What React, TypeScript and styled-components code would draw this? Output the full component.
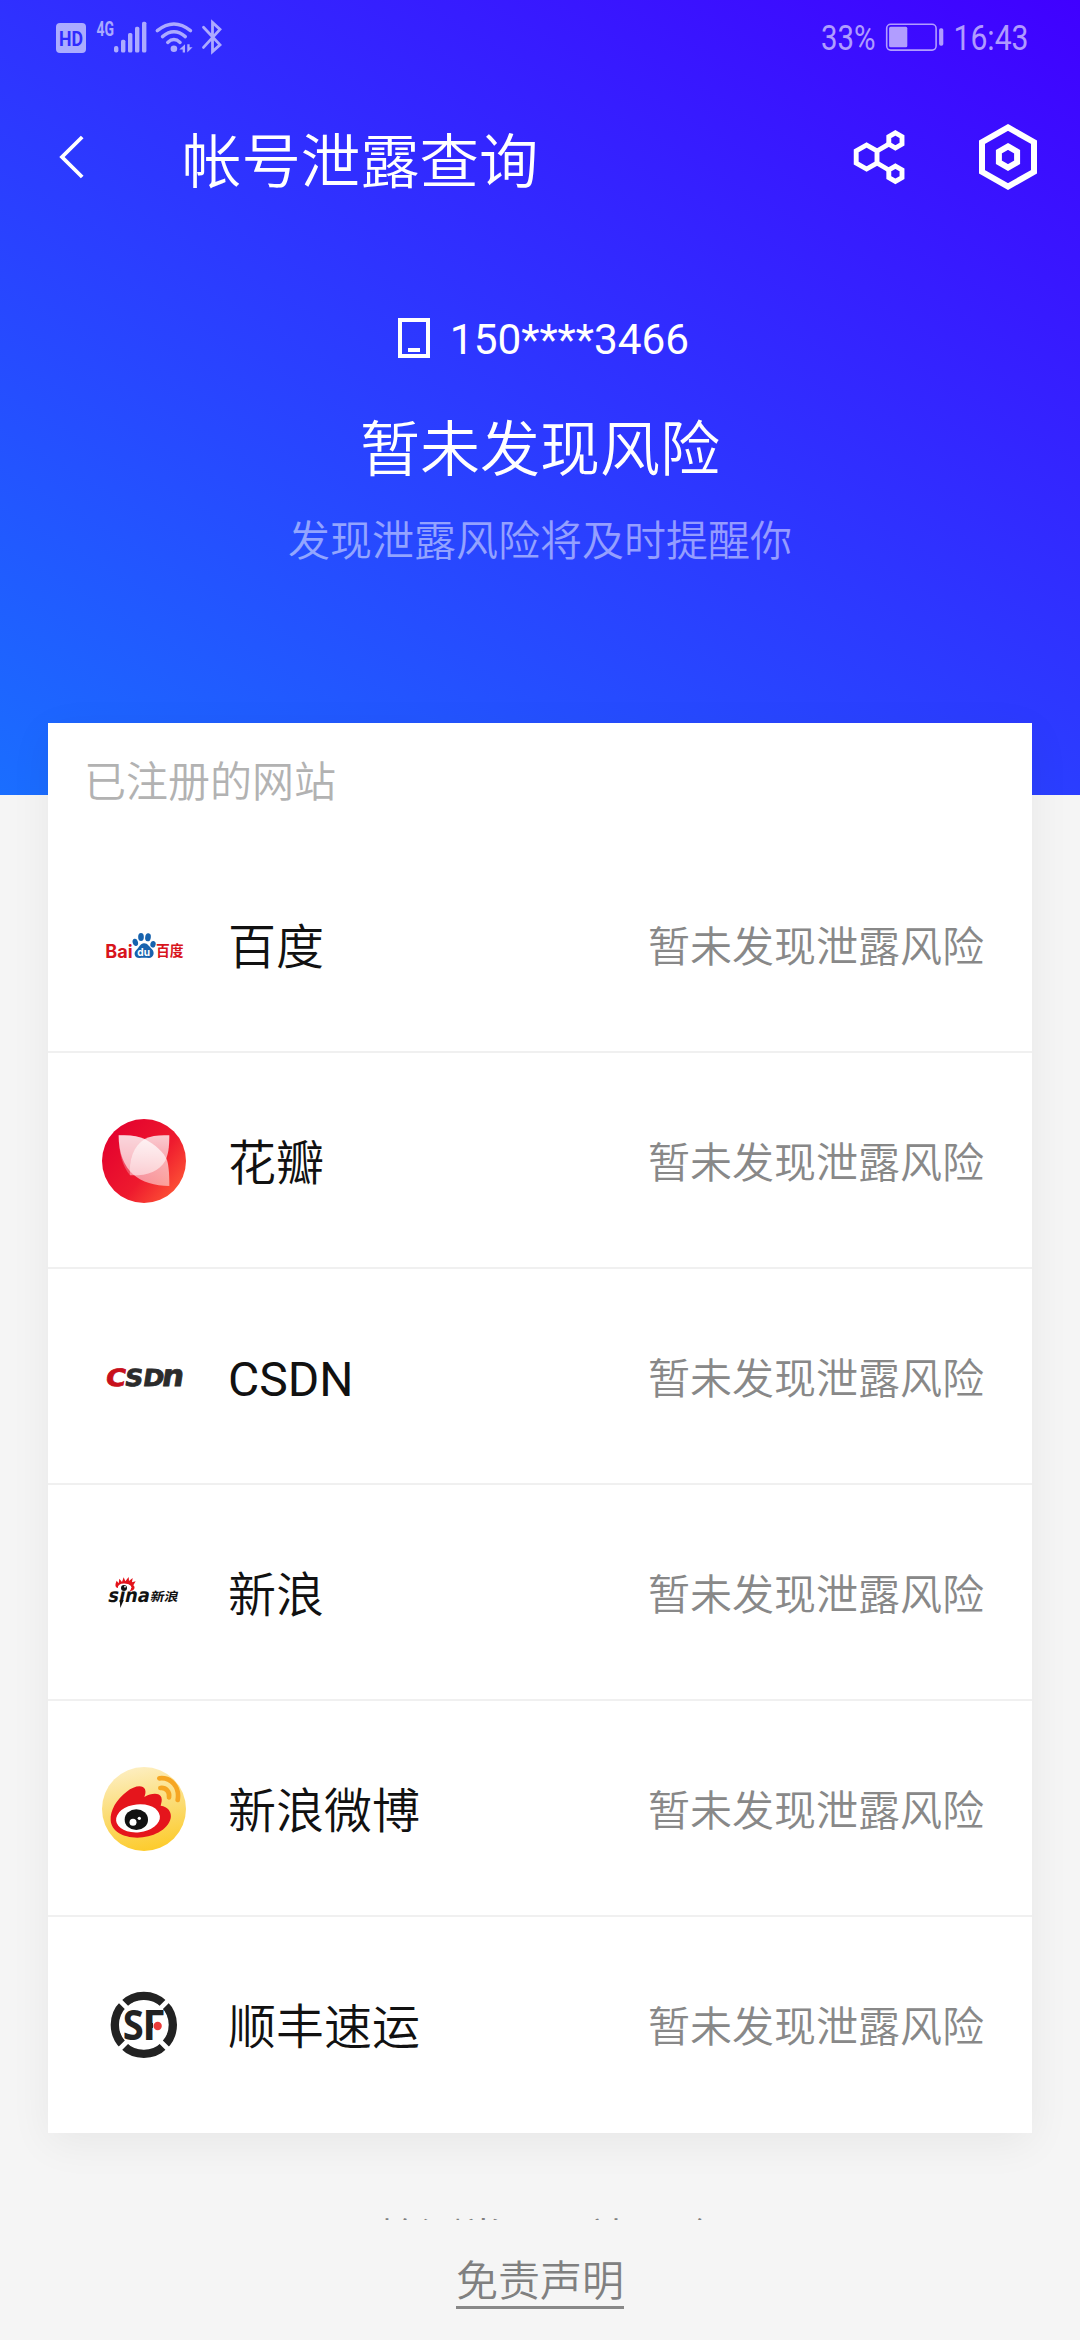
import React from "react";
import styled, { createGlobalStyle } from "styled-components";

const GlobalStyle = createGlobalStyle`
  html, body { margin: 0; padding: 0; background: #f5f5f5; }
  *, *::before, *::after { box-sizing: border-box; }
  body { font-family: Roboto, "Noto Sans CJK SC", sans-serif; font-weight: 350; overflow: hidden; }
  svg { overflow: visible; display: block; flex: none; }
`;

const Page = styled.div`
  width: 1080px;
  height: 2340px;
  display: flex;
  flex-direction: column;
  overflow: hidden;
`;

const Scroller = styled.main`
  height: 2220px;
  flex: none;
  overflow: hidden;
`;

const Hero = styled.header`
  height: 795px;
  background: linear-gradient(210deg, #4000ff 0%, #1a6eff 100%);
  color: #fff;
  display: flex;
  flex-direction: column;
`;

const StatusBar = styled.div`
  height: 76px;
  padding: 0 52px 0 56px;
  display: flex;
  align-items: center;
  justify-content: space-between;
  color: rgba(255, 255, 255, 0.6);
`;

const Toolbar = styled.div`
  height: 162px;
  padding: 0 43px 0 59px;
  display: flex;
  align-items: center;
`;

const Title = styled.h1`
  margin: 11px 0 0 97px;
  flex: 1;
  font-size: 59.4px;
  line-height: 84px;
  font-weight: 350;
`;

const Actions = styled.div`
  display: flex;
  align-items: center;
  gap: 74px;
`;

const Summary = styled.section`
  display: flex;
  flex-direction: column;
  align-items: center;
  padding-top: 73px;
`;

const Phone = styled.div`
  display: flex;
  align-items: center;
  gap: 20px;
  height: 54px;
  padding-left: 7px;
  font-size: 42.3px;
  line-height: 54px;
  font-weight: 400;
`;

const PhoneNumber = styled.span`
  padding-top: 3px;
`;

const Verdict = styled.h2`
  margin: 44px 0 0;
  font-size: 60px;
  line-height: 84px;
  font-weight: 350;
`;

const Hint = styled.p`
  margin: 19px 0 0;
  font-size: 42px;
  line-height: 60px;
  color: rgba(255, 255, 255, 0.5);
`;

const Card = styled.section`
  position: relative;
  width: 984px;
  margin: -72px auto 0;
  background: #fff;
  box-shadow: 0 10px 40px rgba(0, 0, 0, 0.06);
`;

const CardTitle = styled.h3`
  margin: 0;
  height: 114px;
  padding: 30px 36px 0;
  font-size: 42px;
  line-height: 60px;
  font-weight: 350;
  color: #b2b2b2;
`;

const SiteList = styled.ul`
  list-style: none;
  margin: 0;
  padding: 0;
`;

const SiteRow = styled.li`
  height: 216px;
  padding: 2px 48px 0 54px;
  display: flex;
  align-items: center;
  border-bottom: 2px solid #f0f0f0;
  &:last-child { border-bottom-color: #fff; }
`;

const SiteName = styled.span`
  flex: 1;
  margin-left: 42px;
  padding-top: 5px;
  font-size: 48px;
  line-height: 66px;
  color: #111;
`;

const Latin = styled.span`
  font-weight: 400;
`;

const SiteStatus = styled.span`
  padding-top: 5px;
  font-size: 42px;
  line-height: 60px;
  color: #888;
`;

const Logo = styled.svg`
  width: 84px;
  height: 84px;
`;

const More = styled.p`
  margin: 77px 0 0;
  padding-left: 12px;
  text-align: center;
  font-size: 42px;
  line-height: 60px;
  color: #808080;
`;

const Footer = styled.footer`
  height: 120px;
  background: #f5f5f5;
  display: flex;
  justify-content: center;
  align-items: flex-start;
  padding-top: 32px;
`;

const Disclaimer = styled.a`
  height: 57px;
  border-bottom: 3px solid #888;
  font-size: 42px;
  line-height: 60px;
  color: #808080;
`;

const PhoneStateIcons = () => (
  <svg width="168" height="34" viewBox="56 21 168 34" fill="currentColor">
    <rect x="56" y="23" width="30" height="30" rx="4" />
    <text x="59" y="45.5" fontFamily="Roboto" fontWeight="700" fontSize="20" textLength="24" lengthAdjust="spacingAndGlyphs" fill="#302bff">HD</text>
    <text x="96.5" y="36" fontFamily="Roboto" fontWeight="700" fontSize="19.5" textLength="17.5" lengthAdjust="spacingAndGlyphs">4G</text>
    <rect x="114" y="46" width="4.4" height="6.6" rx="2" />
    <rect x="121" y="39.7" width="4.4" height="12.9" rx="1.6" />
    <rect x="128" y="33" width="4.4" height="19.6" rx="1.6" />
    <rect x="135" y="26.8" width="4.4" height="25.8" rx="1.6" />
    <rect x="142" y="21.7" width="4.4" height="30.9" rx="1.6" />
    <g fill="none" stroke="currentColor" strokeWidth="3.4" strokeLinecap="round">
      <path d="M157.3 30.6Q173.9 17.2 190.5 30.6" />
      <path d="M162.5 36.6Q173.9 26.8 185.3 36.6" />
      <path d="M167.7 42.4Q173.9 36.6 180.1 42.4" />
    </g>
    <circle cx="173.9" cy="48.7" r="3.3" />
    <path d="M185 44.3V52.6H182.7V49.4H179.3ZM187.3 44.3V52.6L192.6 47.3H189.6V44.3Z" />
    <path d="M203.5 27.2L220 44.8L212.5 51.5V22.5L220 29.4L203.5 47.4" fill="none" stroke="currentColor" strokeWidth="2.8" strokeLinecap="round" />
  </svg>
);

const PowerAndTime = () => (
  <svg width="208" height="34" viewBox="819.5 21.5 208 34" fill="currentColor">
    <text x="820.5" y="50.5" fontFamily="Roboto" fontWeight="400" fontSize="35.5" textLength="54.5" lengthAdjust="spacingAndGlyphs">33%</text>
    <rect x="886.2" y="24.8" width="49.4" height="25.8" rx="4" fill="none" stroke="currentColor" strokeWidth="1.6" />
    <rect x="888.6" y="27.3" width="18.2" height="20.4" rx="1.5" />
    <rect x="938.6" y="28.8" width="4.2" height="17.4" rx="1.8" />
    <text x="953" y="50.5" fontFamily="Roboto" fontWeight="400" fontSize="35.5" textLength="75" lengthAdjust="spacingAndGlyphs">16:43</text>
  </svg>
);

const BackIcon = () => (
  <svg width="26" height="44" viewBox="59 135 26 44" fill="none" stroke="#fff" strokeWidth="3.8">
    <path d="M82.2 137L62 157L82.2 177" />
  </svg>
);

const ShareIcon = () => (
  <svg width="51" height="56" viewBox="854 129 51 56" fill="none" stroke="#fff" strokeWidth="4.9">
    <path d="M866.6 145L877 151V163L866.6 169L856.2 163V151Z" />
    <path d="M895.4 132.8L902 136.6V144.2L895.4 148L888.8 144.2V136.6Z" />
    <path d="M895.4 166.2L902 170V177.6L895.4 181.4L888.8 177.6V170Z" />
    <path d="M877 151L888.8 144.2M877 163L888.8 170" />
  </svg>
);

const HexIcon = () => (
  <svg width="58" height="66" viewBox="979 124 58 66" fill="none" stroke="#fff">
    <path d="M1008 127.4L1034 142.2V171.8L1008 186.6L982 171.8V142.2Z" strokeWidth="6" />
    <path d="M1008 146.4L1017.1 151.7V162.3L1008 167.6L998.9 162.3V151.7Z" strokeWidth="6" />
  </svg>
);

const PhoneIcon = () => (
  <svg width="32" height="40" viewBox="0 0 32 40" fill="none" stroke="#fff" strokeWidth="4">
    <path d="M2 2H30V38H2ZM10 32H22" />
  </svg>
);

const BaiduLogo = () => (
  <Logo viewBox="216 609 252 252">
    <text x="226" y="773" fontFamily="Inter" fontWeight="700" fontSize="55" textLength="82" lengthAdjust="spacingAndGlyphs" fill="#d8141c">Bai</text>
    <g fill="#1763ae">
      <ellipse cx="333" cy="711" rx="8.5" ry="12" />
      <ellipse cx="354" cy="712" rx="8.5" ry="12" transform="rotate(8 354 712)" />
      <ellipse cx="316" cy="727" rx="8" ry="11" transform="rotate(-15 316 727)" />
      <ellipse cx="369" cy="733" rx="8" ry="10" transform="rotate(10 369 733)" />
      <path d="M342 730C354 730 358 741 366 748C376 758 370 775 356 774C348 773 337 773 329 774C314 775 309 759 319 750C327 743 331 730 342 730Z" />
    </g>
    <text x="322" y="768" fontFamily="Inter" fontWeight="700" fontSize="32" textLength="38" lengthAdjust="spacingAndGlyphs" fill="#fff">du</text>
    <text x="378" y="769" fontFamily="Noto Sans CJK SC" fontWeight="700" fontSize="43" textLength="83" lengthAdjust="spacingAndGlyphs" fill="#d8141c">百度</text>
  </Logo>
);

const HuabanLogo = () => (
  <Logo viewBox="36 57 252 252">
    <defs>
      <linearGradient id="hb" x1="0.1" y1="0.2" x2="0.95" y2="0.9">
        <stop offset="0" stopColor="#e4032e" />
        <stop offset="0.55" stopColor="#ee1a2e" />
        <stop offset="1" stopColor="#ff5a36" />
      </linearGradient>
      <linearGradient id="hbPetal" x1="0" y1="0" x2="0" y2="1">
        <stop offset="0" stopColor="#fff" stopOpacity="0.78" />
        <stop offset="1" stopColor="#fff" stopOpacity="0.5" />
      </linearGradient>
    </defs>
    <circle cx="162" cy="183" r="126" fill="url(#hb)" />
    <path d="M86 106C120 104 145 108 164 117C195 133 222 158 231 180C237 200 238 230 238 258C150 258 86 215 86 106Z" fill="url(#hbPetal)" />
    <path d="M238 106C238 145 234 165 226 182C205 215 175 227 120 226C116 180 130 138 164 117C185 106 210 105 238 106Z" fill="url(#hbPetal)" />
    <path d="M86 106C120 104 145 108 164 117C130 138 116 180 120 226C98 200 86 160 86 106Z" fill="#fff" opacity="0.25" />
  </Logo>
);

const CsdnLogo = () => (
  <Logo viewBox="36 -15 252 252">
    <g fontFamily="DejaVu Sans" fontWeight="700" transform="translate(0 137) skewX(-9)" strokeWidth="2.5">
      <text x="44" y="0" fontSize="71" textLength="60" lengthAdjust="spacingAndGlyphs" fill="#c8101c" stroke="#c8101c">C</text>
      <text x="101" y="0" fontSize="70" textLength="118" lengthAdjust="spacingAndGlyphs" fill="#2b2b2b" stroke="#2b2b2b">SD</text>
      <text x="212" y="0" fontSize="90" textLength="66" lengthAdjust="spacingAndGlyphs" fill="#2b2b2b" stroke="#2b2b2b">n</text>
    </g>
  </Logo>
);

const SinaLogo = () => (
  <Logo viewBox="36 3 252 252">
    <path d="M78 112C74 104 78 98 80 92L86 100L88 86L96 96L101 82L106 94L116 81L117 93L128 84L126 97L137 94L130 106C140 115 128 124 118 124C128 116 124 102 108 101C92 99 84 104 84 114Z" fill="#e3131b" />
    <ellipse cx="104" cy="112" rx="20" ry="10" fill="#fff" />
    <circle cx="102" cy="114" r="9" fill="#111" />
    <circle cx="105" cy="110" r="2.6" fill="#fff" />
    <g transform="translate(0 156) skewX(-12)" fill="#111">
      <text x="52" y="0" fontFamily="DejaVu Sans" fontWeight="700" fontSize="58" textLength="124" lengthAdjust="spacingAndGlyphs">sına</text>
      <text x="179" y="-2" fontFamily="Noto Sans CJK SC" fontWeight="700" fontSize="37" textLength="84" lengthAdjust="spacingAndGlyphs">新浪</text>
    </g>
    <path d="M89 150L101 150L91 174Z" fill="#111" />
  </Logo>
);

const WeiboLogo = () => (
  <Logo viewBox="36 36 252 252">
    <defs>
      <linearGradient id="wb" x1="0.4" y1="0" x2="0.6" y2="1">
        <stop offset="0" stopColor="#fdeec0" />
        <stop offset="0.5" stopColor="#fbdc74" />
        <stop offset="1" stopColor="#fdcb2a" />
      </linearGradient>
    </defs>
    <circle cx="162" cy="162" r="126" fill="url(#wb)" />
    <path d="M62 196C60 166 80 132 110 110C132 93 158 88 165 103C168 111 166 119 163 126C184 114 208 112 214 127C217 136 214 144 212 152C234 154 246 172 242 190C234 226 186 248 142 248C98 248 64 228 62 196Z" fill="#e5151c" />
    <ellipse cx="144" cy="190" rx="66" ry="42" transform="rotate(-6 144 190)" fill="#fff" />
    <ellipse cx="139" cy="194" rx="35" ry="31" fill="#111" />
    <circle cx="129" cy="202" r="10.5" fill="#fff" />
    <circle cx="148" cy="190" r="5" fill="#fff" />
    <g fill="none" stroke="#f6a623" strokeWidth="14" strokeLinecap="round">
      <path d="M208 70C243 66 270 96 263 135" />
      <path d="M211 99C228 97 240 110 237 127" />
    </g>
  </Logo>
);

const SfLogo = () => (
  <Logo viewBox="36 39 252 252">
    <circle cx="161.5" cy="164.5" r="87" fill="none" stroke="#222" strokeWidth="25" />
    <path d="M80 83L243 246M243 83L80 246" stroke="#fff" strokeWidth="14" />
    <circle cx="161.5" cy="164.5" r="73" fill="#fff" />
    <g fontFamily="Open Sans" fontWeight="700" fill="#222">
      <text x="98" y="211" fontSize="122" textLength="63" lengthAdjust="spacingAndGlyphs">S</text>
      <text x="157" y="211" fontSize="122" textLength="70" lengthAdjust="spacingAndGlyphs">F</text>
    </g>
    <rect x="189" y="141" width="40" height="55" fill="#fff" />
    <circle cx="203" cy="168" r="12.5" fill="#ea3a3a" />
  </Logo>
);

const sites: { name: string; latin?: boolean; logo: React.ReactNode }[] = [
  { name: "百度", logo: <BaiduLogo /> },
  { name: "花瓣", logo: <HuabanLogo /> },
  { name: "CSDN", latin: true, logo: <CsdnLogo /> },
  { name: "新浪", logo: <SinaLogo /> },
  { name: "新浪微博", logo: <WeiboLogo /> },
  { name: "顺丰速运", logo: <SfLogo /> },
];

export default function App() {
  return (
    <Page>
      <GlobalStyle />
      <Scroller>
        <Hero>
          <StatusBar>
            <PhoneStateIcons />
            <PowerAndTime />
          </StatusBar>
          <Toolbar>
            <BackIcon />
            <Title>帐号泄露查询</Title>
            <Actions>
              <ShareIcon />
              <HexIcon />
            </Actions>
          </Toolbar>
          <Summary>
            <Phone>
              <PhoneIcon />
              <PhoneNumber>150****3466</PhoneNumber>
            </Phone>
            <Verdict>暂未发现风险</Verdict>
            <Hint>发现泄露风险将及时提醒你</Hint>
          </Summary>
        </Hero>
        <Card>
          <CardTitle>已注册的网站</CardTitle>
          <SiteList>
            {sites.map((site) => (
              <SiteRow key={site.name}>
                {site.logo}
                <SiteName>{site.latin ? <Latin>{site.name}</Latin> : site.name}</SiteName>
                <SiteStatus>暂未发现泄露风险</SiteStatus>
              </SiteRow>
            ))}
          </SiteList>
        </Card>
        <More>检测常见网站风险</More>
      </Scroller>
      <Footer>
        <Disclaimer>免责声明</Disclaimer>
      </Footer>
    </Page>
  );
}
